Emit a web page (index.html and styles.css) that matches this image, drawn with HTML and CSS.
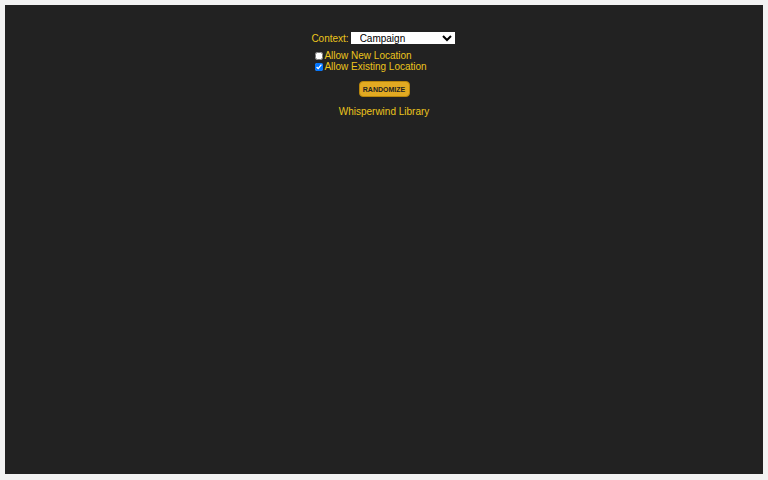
FILE: index.html
```html
<!DOCTYPE html>
<html>
<head>
<meta charset="utf-8">
<link rel="stylesheet" href="styles.css">
</head>
<body>
<div class="app">
  <div class="panel">
    <div class="form">
      <div class="row context">
        <label class="lbl" for="ctx">Context:</label>
        <select id="ctx" class="sel">
          <option>Campaign</option>
        </select>
      </div>
      <div class="checks">
        <label class="chk"><input type="checkbox">Allow New Location</label>
        <label class="chk"><input type="checkbox" checked>Allow Existing Location</label>
      </div>
    </div>
    <button class="btn">RANDOMIZE</button>
    <div class="result">Whisperwind Library</div>
  </div>
</div>
</body>
</html>
```
FILE: styles.css
```css
html, body { margin: 0; padding: 0; }
body {
  background: #f3f3f3;
  padding: 5px 5px 6px 5px;
  font-family: "Liberation Sans", Arial, sans-serif;
}
.app {
  background: #222222;
  height: 469px;
  color: #ecc51c;
  font-size: 10px;
}
.panel {
  display: flex;
  flex-direction: column;
  align-items: center;
  padding-top: 27px;
}
.form { display: flex; flex-direction: column; align-items: flex-start; margin-right: 2px; }
.row { display: flex; align-items: center; gap: 2px; height: 12px; }
.sel {
  width: 104px;
  height: 12px;
  font-size: 10px;
  font-family: "Liberation Sans", Arial, sans-serif;
  padding: 0 0 0 5px;
  border: none;
  border-radius: 0;
  background: #fff;
  color: #000;
  margin: 0;
}
.checks {
  display: flex;
  flex-direction: column;
  margin-top: 6px;
}
.chk { display: flex; align-items: center; height: 11px; }
.chk input { width: 8px; height: 8px; margin: 0 1px 0 4px; }
.btn {
  margin-top: 9px;
  background: #e2aa22;
  border: 1px solid #b8860b;
  border-radius: 4px;
  color: #222;
  font-weight: bold;
  font-size: 7px;
  font-family: "Liberation Sans", Arial, sans-serif;
  width: 51px;
  height: 16px;
  padding: 0;
}
.result { margin-top: 9px; }
```
